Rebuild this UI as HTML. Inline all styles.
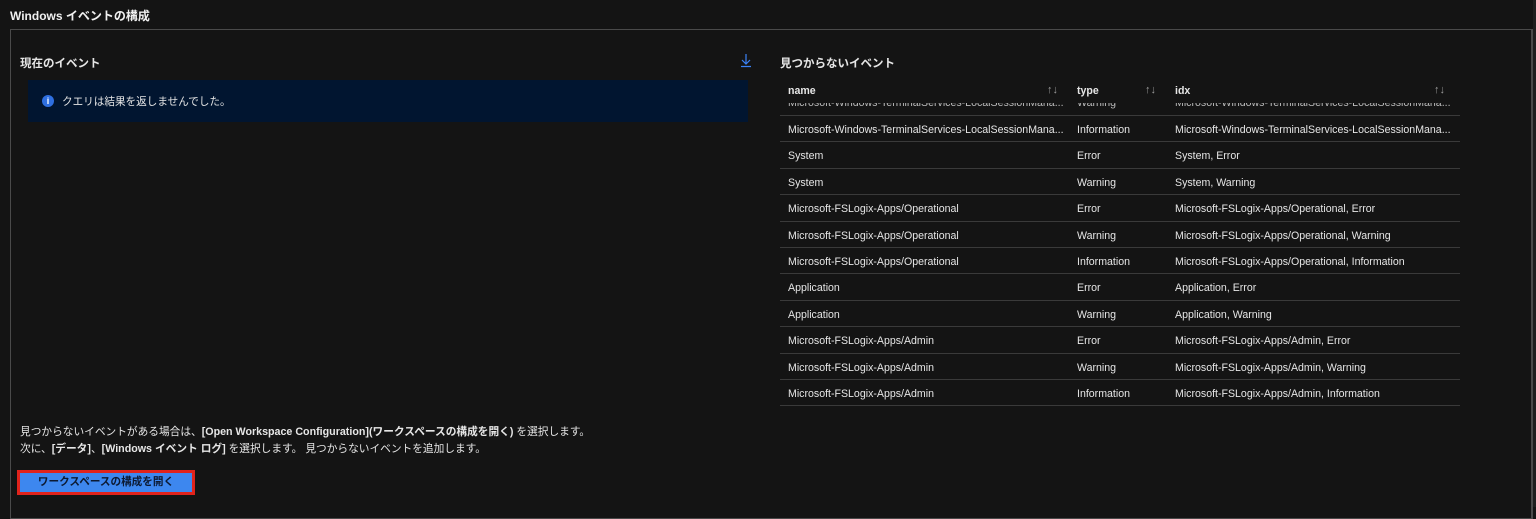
<!DOCTYPE html>
<html><head><meta charset="utf-8"><style>
*{margin:0;padding:0;box-sizing:border-box}
body{width:1536px;height:507px;background:#141414;color:#e6e6e6;font-family:"Liberation Sans","Noto Sans CJK JP",sans-serif;font-size:10.6px;position:relative;overflow:hidden}
.abs{position:absolute;white-space:nowrap}
.b{font-weight:bold}
.box{position:absolute;left:10px;top:29px;width:1523px;height:490px;border:1px solid #4a4a4a;border-right:2px solid #4a4a4a}
.row{position:absolute;left:780px;width:680px;height:26.4px;border-bottom:1px solid #3a3a3a;font-size:10.6px}
.row span{position:absolute;top:8px;white-space:nowrap}
.c1{left:8px}.c2{left:297px}.c3{left:395px}
.sort{position:absolute;color:#999;font-size:11px}
</style></head><body>
<div class="abs b" style="left:10px;top:7px;font-size:12px;color:#f0f0f0">Windows イベントの構成</div>
<div class="box"></div>
<div class="abs" style="left:1533px;top:0;width:3px;height:507px;background:#1f1f1f"></div>
<div class="abs b" style="left:20px;top:55px;font-size:11.5px">現在のイベント</div>
<svg class="abs" style="left:740px;top:53px" width="12" height="15" viewBox="0 0 12 15"><path d="M6 1V11M2 7L6 11L10 7M1 13.5H11" stroke="#3b82f6" stroke-width="1.2" fill="none"/></svg>
<div class="abs" style="left:28px;top:80px;width:720px;height:42px;background:#011530"></div>
<div class="abs" style="left:42px;top:95px;width:12px;height:12px;border-radius:50%;background:#2f6fe0;color:#fff;font-size:9px;font-weight:bold;text-align:center;line-height:12px">i</div>
<div class="abs" style="left:62px;top:94px">クエリは結果を返しませんでした。</div>

<div class="abs b" style="left:780px;top:55px;font-size:11.5px">見つからないイベント</div>
<div class="abs b" style="left:788px;top:85px">name</div>
<div class="abs b" style="left:1077px;top:85px">type</div>
<div class="abs b" style="left:1175px;top:85px">idx</div>
<div class="sort" style="left:1047px;top:84px">↑↓</div>
<div class="sort" style="left:1145px;top:84px">↑↓</div>
<div class="sort" style="left:1434px;top:84px">↑↓</div>
<div class="row" style="top:103px;height:13px;overflow:hidden"><span class="c1" style="top:-6px;color:#bbb">Microsoft-Windows-TerminalServices-LocalSessionMana...</span><span class="c2" style="top:-6px;color:#bbb">Warning</span><span class="c3" style="top:-6px;color:#bbb">Microsoft-Windows-TerminalServices-LocalSessionMana...</span></div>
<div class="row" style="top:116px"><span class="c1">Microsoft-Windows-TerminalServices-LocalSessionMana...</span><span class="c2">Information</span><span class="c3">Microsoft-Windows-TerminalServices-LocalSessionMana...</span></div>
<div class="row" style="top:142.4px"><span class="c1">System</span><span class="c2">Error</span><span class="c3">System, Error</span></div>
<div class="row" style="top:168.8px"><span class="c1">System</span><span class="c2">Warning</span><span class="c3">System, Warning</span></div>
<div class="row" style="top:195.2px"><span class="c1">Microsoft-FSLogix-Apps/Operational</span><span class="c2">Error</span><span class="c3">Microsoft-FSLogix-Apps/Operational, Error</span></div>
<div class="row" style="top:221.6px"><span class="c1">Microsoft-FSLogix-Apps/Operational</span><span class="c2">Warning</span><span class="c3">Microsoft-FSLogix-Apps/Operational, Warning</span></div>
<div class="row" style="top:248px"><span class="c1">Microsoft-FSLogix-Apps/Operational</span><span class="c2">Information</span><span class="c3">Microsoft-FSLogix-Apps/Operational, Information</span></div>
<div class="row" style="top:274.4px"><span class="c1">Application</span><span class="c2">Error</span><span class="c3">Application, Error</span></div>
<div class="row" style="top:300.8px"><span class="c1">Application</span><span class="c2">Warning</span><span class="c3">Application, Warning</span></div>
<div class="row" style="top:327.2px"><span class="c1">Microsoft-FSLogix-Apps/Admin</span><span class="c2">Error</span><span class="c3">Microsoft-FSLogix-Apps/Admin, Error</span></div>
<div class="row" style="top:353.6px"><span class="c1">Microsoft-FSLogix-Apps/Admin</span><span class="c2">Warning</span><span class="c3">Microsoft-FSLogix-Apps/Admin, Warning</span></div>
<div class="row" style="top:380px"><span class="c1">Microsoft-FSLogix-Apps/Admin</span><span class="c2">Information</span><span class="c3">Microsoft-FSLogix-Apps/Admin, Information</span></div>

<div class="abs" style="left:20px;top:424px;font-size:10.7px">見つからないイベントがある場合は、<b>[Open Workspace Configuration](ワークスペースの構成を開く)</b> を選択します。</div>
<div class="abs" style="left:20px;top:441px;font-size:10.7px">次に、<b>[データ]</b>、<b>[Windows イベント ログ]</b> を選択します。 見つからないイベントを追加します。</div>
<div class="abs" style="left:17px;top:470px;width:178px;height:25px;border:3px solid #e0231c;background:#3d87ef;color:#0c1a33;font-weight:bold;font-size:10.6px;text-align:center;line-height:19px">ワークスペースの構成を開く</div>
</body></html>
